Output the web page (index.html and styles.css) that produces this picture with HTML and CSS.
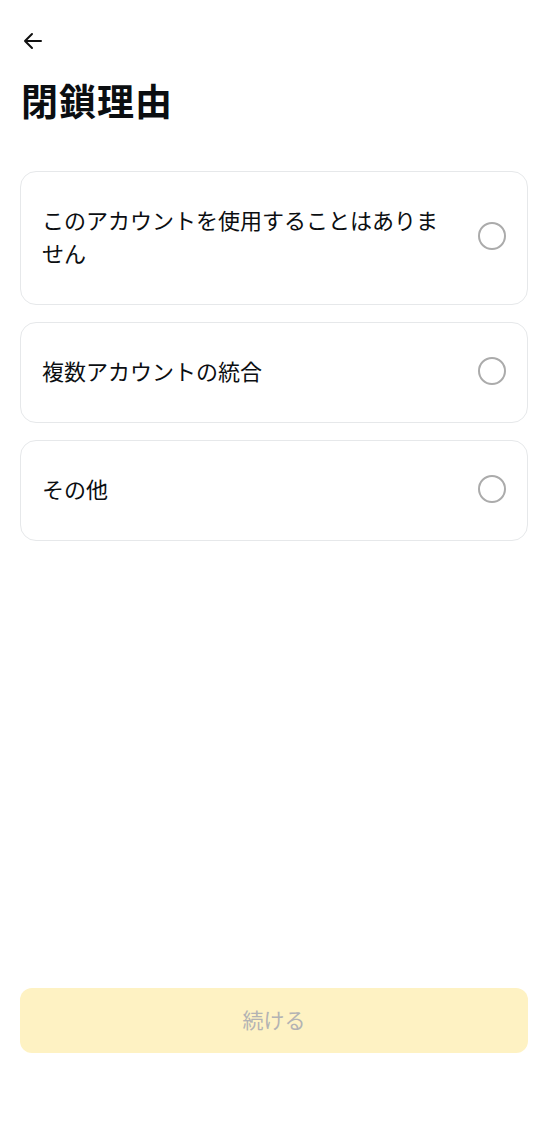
FILE: index.html
```html
<!DOCTYPE html>
<html lang="ja">
<head>
<meta charset="utf-8">
<link rel="stylesheet" href="styles.css">
</head>
<body>
<div class="page">
  <header class="top">
    <svg class="back" width="24" height="24" viewBox="0 0 24 24" fill="none" stroke="#111111" stroke-width="2" stroke-linecap="round" stroke-linejoin="round"><path d="M20 12H4M11 5l-7 7 7 7"/></svg>
  </header>
  <h1 class="title">閉鎖理由</h1>
  <div class="options">
    <div class="option"><span class="label">このアカウントを使用することはありません</span><span class="radio"></span></div>
    <div class="option"><span class="label">複数アカウントの統合</span><span class="radio"></span></div>
    <div class="option"><span class="label">その他</span><span class="radio"></span></div>
  </div>
  <div class="footer">
    <button class="continue" disabled>続ける</button>
  </div>
</div>
</body>
</html>
```

FILE: styles.css
```css
* { box-sizing: border-box; }
html, body { margin: 0; padding: 0; background: #ffffff; }
body {
  font-family: "Noto Sans CJK JP", "Noto Sans", sans-serif;
  color: #0b0e11;
}
.page {
  min-height: 1124px;
  display: flex;
  flex-direction: column;
  padding: 0 22px 0 20px;
}
.top {
  height: 53px;
  padding-top: 29px;
  padding-left: 1px;
}
.back { display: block; }
.title {
  margin: 21px 0 0 1px;
  font-size: 37px;
  line-height: 52px;
  font-weight: 700;
  letter-spacing: 1px;
}
.options {
  margin-top: 45px;
  display: flex;
  flex-direction: column;
  gap: 17px;
}
.option {
  display: flex;
  align-items: center;
  gap: 30px;
  padding: 31px 21px 35px 21px;
  border: 1px solid #e6e8ea;
  border-radius: 16px;
}
.label {
  flex: 1;
  font-size: 22px;
  line-height: 33px;
  font-weight: 400;
}
.radio {
  flex: none;
  width: 28px;
  height: 28px;
  border-radius: 50%;
  border: 2px solid #ababab;
}
.footer {
  margin-top: auto;
  padding-bottom: 71px;
}
.continue {
  display: block;
  width: 100%;
  height: 65px;
  padding: 0 0 3px;
  border: none;
  border-radius: 12px;
  background: #fef2c3;
  color: #b3b3b3;
  font-family: "Noto Sans CJK JP", "Noto Sans", sans-serif;
  font-size: 21px;
}
```
